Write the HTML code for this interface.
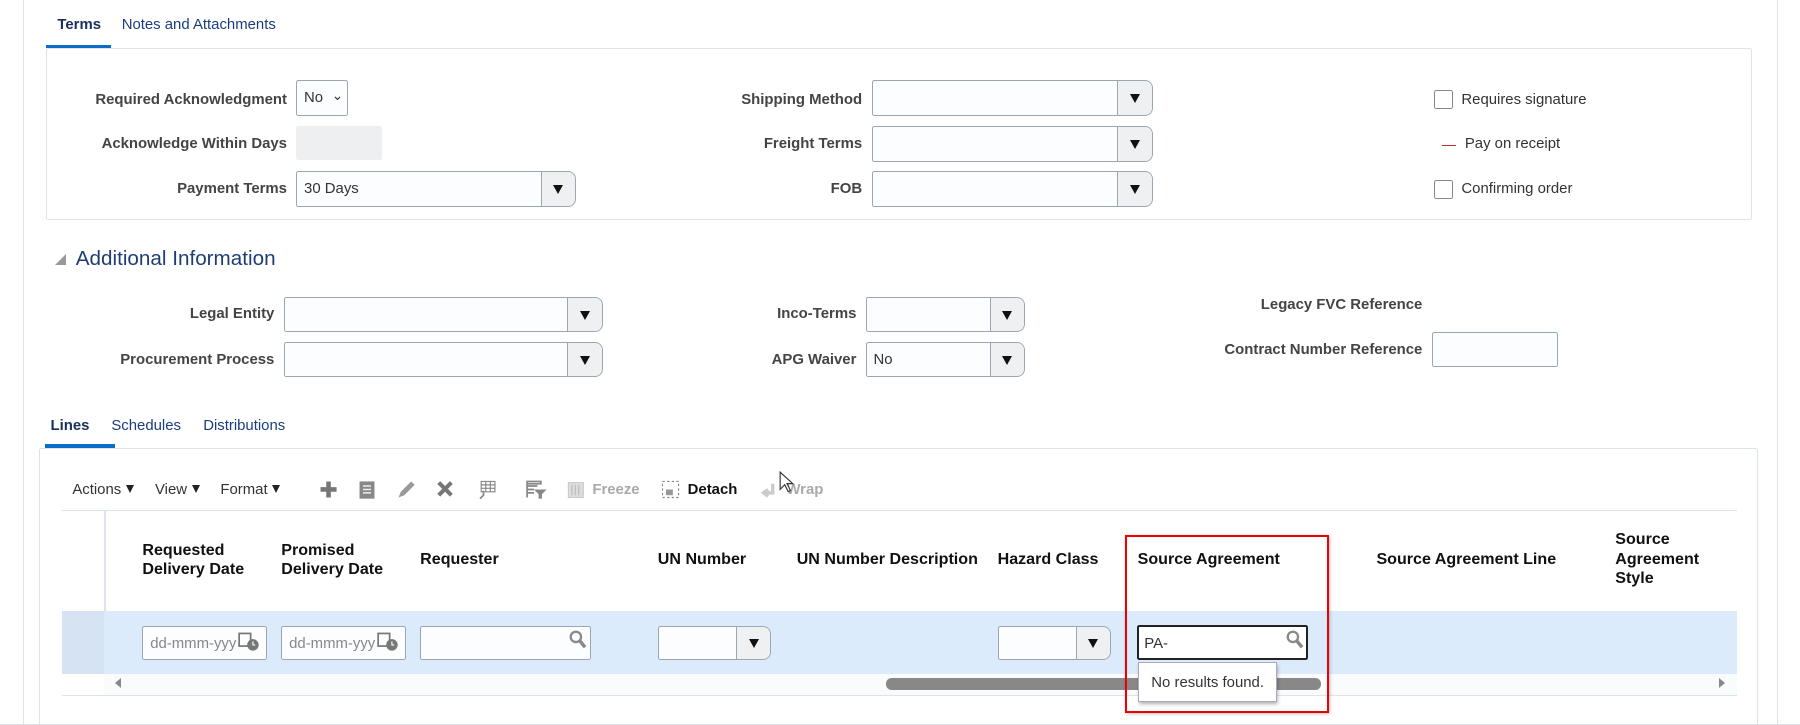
<!DOCTYPE html>
<html><head><meta charset="utf-8"><style>
html,body{margin:0;padding:0;background:#fff;width:1800px;height:725px;overflow:hidden}
#w{position:relative;width:1568px;height:632px;zoom:1.148;font-family:"Liberation Sans",Arial,sans-serif;font-size:13px;color:#333}
.a{position:absolute;white-space:nowrap}
.lb{position:absolute;text-align:right;font-weight:bold;color:#444;font-size:13px}
.inp{position:absolute;border:1px solid #9aa6b2;background:#fbfdff;border-radius:2px;box-sizing:border-box}
.cb{position:absolute;border:1px solid #9aa6b2;background:#fbfdff;border-radius:2px 7px 7px 2px;box-sizing:border-box}
.cb .bt{position:absolute;right:0;top:0;bottom:0;width:29px;border-left:1px solid #9aa6b2;background:#eef0f2;border-radius:0 7px 7px 0}
.cb .bt:after{content:"";position:absolute;left:10px;top:11px;border-left:5px solid transparent;border-right:5px solid transparent;border-top:8px solid #111}
.tx{position:absolute;left:6px;top:7px;font-size:13px;color:#333}
.th{position:absolute;font-weight:bold;color:#111;font-size:14px;line-height:17px}
.tb{position:absolute;color:#333;font-size:13px}
.dd{display:inline-block;border-left:4px solid transparent;border-right:4px solid transparent;border-top:7px solid #222;margin-left:4px;vertical-align:1px}
</style></head><body><div id="w">
<div class="a" style="left:20px;top:0;width:1px;height:632px;background:#dde3ea"></div>
<div class="a" style="left:1548px;top:0;width:1px;height:632px;background:#dde3ea"></div>
<!-- tabs -->
<div class="a" style="left:50px;top:14px;font-weight:bold;color:#1a2f5f">Terms</div>
<div class="a" style="left:106px;top:14px;color:#1a3d80">Notes and Attachments</div>
<div class="a" style="left:40px;top:39px;width:57px;height:3px;background:#0a6ec8"></div>
<div class="a" style="left:40px;top:42px;width:1484px;height:148px;border:1px solid #dde3ea;border-radius:2px"></div>
<div class="lb" style="left:40px;width:210px;top:79px">Required Acknowledgment</div>
<div class="inp" style="left:258px;top:70px;width:45px;height:31px"><span class="tx">No</span><span class="a" style="left:30px;top:6px;font-size:12px">&#8964;</span></div>
<div class="lb" style="left:40px;width:210px;top:118px">Acknowledge Within Days</div>
<div class="a" style="left:258px;top:110px;width:75px;height:29px;background:#eeeff1;border-radius:2px"></div>
<div class="lb" style="left:40px;width:210px;top:157px">Payment Terms</div>
<div class="cb" style="left:258px;top:149px;width:244px;height:31px"><span class="tx">30 Days</span><div class="bt"></div></div>
<div class="lb" style="left:540px;width:211px;top:79px">Shipping Method</div>
<div class="cb" style="left:760px;top:70px;width:244px;height:31px"><div class="bt"></div></div>
<div class="lb" style="left:540px;width:211px;top:118px">Freight Terms</div>
<div class="cb" style="left:760px;top:110px;width:244px;height:31px"><div class="bt"></div></div>
<div class="lb" style="left:540px;width:211px;top:157px">FOB</div>
<div class="cb" style="left:760px;top:149px;width:244px;height:31px"><div class="bt"></div></div>
<div class="a" style="left:1249px;top:78px;width:15px;height:15px;border:1px solid #888;border-radius:2px;background:#fff"></div>
<div class="a" style="left:1273px;top:79px">Requires signature</div>
<div class="a" style="left:1256px;top:126px;width:12px;height:1px;background:#b33"></div>
<div class="a" style="left:1276px;top:118px">Pay on receipt</div>
<div class="a" style="left:1249px;top:157px;width:15px;height:15px;border:1px solid #888;border-radius:2px;background:#fff"></div>
<div class="a" style="left:1273px;top:157px">Confirming order</div>
<!-- additional -->
<div class="a" style="left:48px;top:221px;width:0;height:0;border-left:10px solid transparent;border-bottom:10px solid #999"></div>
<div class="a" style="left:66px;top:215px;font-size:18px;color:#1f3d74">Additional Information</div>
<div class="lb" style="left:40px;width:199px;top:266px">Legal Entity</div>
<div class="cb" style="left:247px;top:259px;width:278px;height:30px"><div class="bt"></div></div>
<div class="lb" style="left:40px;width:199px;top:306px">Procurement Process</div>
<div class="cb" style="left:247px;top:298px;width:278px;height:30px"><div class="bt"></div></div>
<div class="lb" style="left:540px;width:206px;top:266px">Inco-Terms</div>
<div class="cb" style="left:754px;top:259px;width:139px;height:30px"><div class="bt"></div></div>
<div class="lb" style="left:540px;width:206px;top:306px">APG Waiver</div>
<div class="cb" style="left:754px;top:298px;width:139px;height:30px"><span class="tx">No</span><div class="bt"></div></div>
<div class="lb" style="left:1000px;width:239px;top:258px">Legacy FVC Reference</div>
<div class="lb" style="left:1000px;width:239px;top:297px">Contract Number Reference</div>
<div class="inp" style="left:1247px;top:289px;width:110px;height:31px"></div>
<!-- lines tabs -->
<div class="a" style="left:44px;top:363px;font-weight:bold;color:#1a2f5f">Lines</div>
<div class="a" style="left:97px;top:363px;color:#1a3d80">Schedules</div>
<div class="a" style="left:177px;top:363px;color:#1a3d80">Distributions</div>
<div class="a" style="left:39px;top:387px;width:61px;height:3px;background:#0a6ec8"></div>
<div class="a" style="left:34px;top:390px;width:1496px;height:250px;border:1px solid #dde3ea;border-radius:2px"></div>
<!-- toolbar -->
<div class="tb" style="left:63px;top:419px">Actions<span class="dd"></span></div>
<div class="tb" style="left:135px;top:419px">View<span class="dd"></span></div>
<div class="tb" style="left:192px;top:419px">Format<span class="dd"></span></div>
<svg class="a" style="left:276px;top:416px" width="450" height="20" viewBox="0 0 450 20">
<path d="M3 10h14M10 3v14" stroke="#777" stroke-width="4"/>
<rect x="37" y="3" width="13" height="15" fill="#888"/><path d="M40 7h7M40 10h7M40 13h7" stroke="#eee" stroke-width="1.3"/>
<path d="M71 17l2-5 9-9 3 3-9 9z" fill="#999"/>
<path d="M106 4l11 11M117 4l-11 11" stroke="#777" stroke-width="3.5"/>
<path d="M143 3h12v9h-12zM143 6h12M147 3v9M151 3v9M143 9h12" stroke="#888" stroke-width="1" fill="none"/><path d="M142 18l3-3v-4" stroke="#888" stroke-width="1.5" fill="none"/>
<path d="M183 3h12v2h-12zM183 7h9M183 10h6M183 13h6M183 3v14" stroke="#888" stroke-width="1.5" fill="none"/><path d="M189 10h11l-4 4v4h-3v-4z" fill="#888"/>
<rect x="219" y="4" width="13" height="13" fill="#ddd" stroke="#ccc"/><path d="M222 6v9M225 6v9M228 6v9" stroke="#bbb"/>
<path d="M301 3h14v14h-14z" stroke="#888" stroke-dasharray="2 2" fill="none"/><rect x="304" y="10" width="6" height="5" fill="#999"/>
<path d="M397 5v8h-7M393 10l-4 3 4 3" stroke="#ccc" stroke-width="3" fill="none"/>
</svg>
<div class="tb" style="left:516px;top:419px;font-weight:bold;color:#aaa">Freeze</div>
<div class="tb" style="left:599px;top:419px;font-weight:bold;color:#111">Detach</div>
<div class="tb" style="left:685px;top:419px;font-weight:bold;color:#aaa">Wrap</div>
<svg class="a" style="left:679px;top:410px" width="14" height="20"><path d="M1 1v15l4-4 3 6 2-1-3-6h5z" fill="#fff" stroke="#333"/></svg>
<div class="a" style="left:54px;top:444px;width:1459px;height:1px;background:#dde3ea"></div>
<!-- table -->
<div class="a" style="left:91px;top:445px;width:1px;height:87px;background:#dde3ea"></div>
<div class="th" style="left:124px;top:471px">Requested<br>Delivery Date</div>
<div class="th" style="left:245px;top:471px">Promised<br>Delivery Date</div>
<div class="th" style="left:366px;top:479px">Requester</div>
<div class="th" style="left:573px;top:479px">UN Number</div>
<div class="th" style="left:694px;top:479px">UN Number Description</div>
<div class="th" style="left:869px;top:479px">Hazard Class</div>
<div class="th" style="left:991px;top:479px">Source Agreement</div>
<div class="th" style="left:1199px;top:479px">Source Agreement Line</div>
<div class="th" style="left:1407px;top:462px">Source<br>Agreement<br>Style</div>
<div class="a" style="left:54px;top:532px;width:1459px;height:55px;background:#dcebfb"></div>
<div class="a" style="left:54px;top:532px;width:37px;height:55px;background:#d5e3f2"></div>
<div class="inp" style="left:124px;top:545px;width:109px;height:30px"><span class="tx" style="color:#888">dd-mmm-yyy</span></div>
<div class="inp" style="left:245px;top:545px;width:109px;height:30px"><span class="tx" style="color:#888">dd-mmm-yyy</span></div>
<svg class="a" style="left:207px;top:549px" width="20" height="20"><rect x="1" y="3" width="10" height="11" fill="none" stroke="#777" stroke-width="1.5"/><circle cx="13" cy="13" r="5" fill="#777"/><path d="M13 10v3h2" stroke="#fff" fill="none"/></svg>
<svg class="a" style="left:328px;top:549px" width="20" height="20"><rect x="1" y="3" width="10" height="11" fill="none" stroke="#777" stroke-width="1.5"/><circle cx="13" cy="13" r="5" fill="#777"/><path d="M13 10v3h2" stroke="#fff" fill="none"/></svg>
<div class="inp" style="left:366px;top:545px;width:149px;height:30px"></div>
<svg class="a" style="left:496px;top:549px" width="16" height="18"><circle cx="6" cy="6" r="4.5" fill="none" stroke="#888" stroke-width="2"/><path d="M9 9l5 6" stroke="#888" stroke-width="3"/></svg>
<div class="cb" style="left:573px;top:545px;width:99px;height:30px"><div class="bt"></div></div>
<div class="cb" style="left:869px;top:545px;width:99px;height:30px"><div class="bt"></div></div>
<div class="inp" style="left:990px;top:544px;width:149px;height:31px;border:2px solid #222;background:#fff"><span class="tx" style="top:7px;left:5px">PA-</span></div>
<svg class="a" style="left:1120px;top:549px" width="16" height="18"><circle cx="6" cy="6" r="4.5" fill="none" stroke="#888" stroke-width="2"/><path d="M9 9l5 6" stroke="#888" stroke-width="3"/></svg>
<div class="a" style="left:91px;top:587px;width:1422px;height:18px;background:#fafbfc"></div>
<div class="a" style="left:100px;top:591px;border-top:5px solid transparent;border-bottom:5px solid transparent;border-right:6px solid #888"></div>
<div class="a" style="left:1497px;top:591px;border-top:5px solid transparent;border-bottom:5px solid transparent;border-left:6px solid #888"></div>
<div class="a" style="left:772px;top:591px;width:379px;height:10px;background:#888;border-radius:5px"></div>
<div class="a" style="left:54px;top:605px;width:1459px;height:1px;background:#dde3ea"></div>
<div class="a" style="left:991px;top:577px;width:120px;height:33px;background:#fff;border:1px solid #aab;box-shadow:1px 2px 3px rgba(0,0,0,.3)"><span class="a" style="left:11px;top:9px">No results found.</span></div>
<div class="a" style="left:980px;top:466px;width:174px;height:152px;border:2px solid #e00;box-shadow:1px 1px 3px rgba(0,0,0,.3)"></div>
<div class="a" style="left:0;top:631px;width:1568px;height:1px;background:#dde3ea"></div>
</div></body></html>
